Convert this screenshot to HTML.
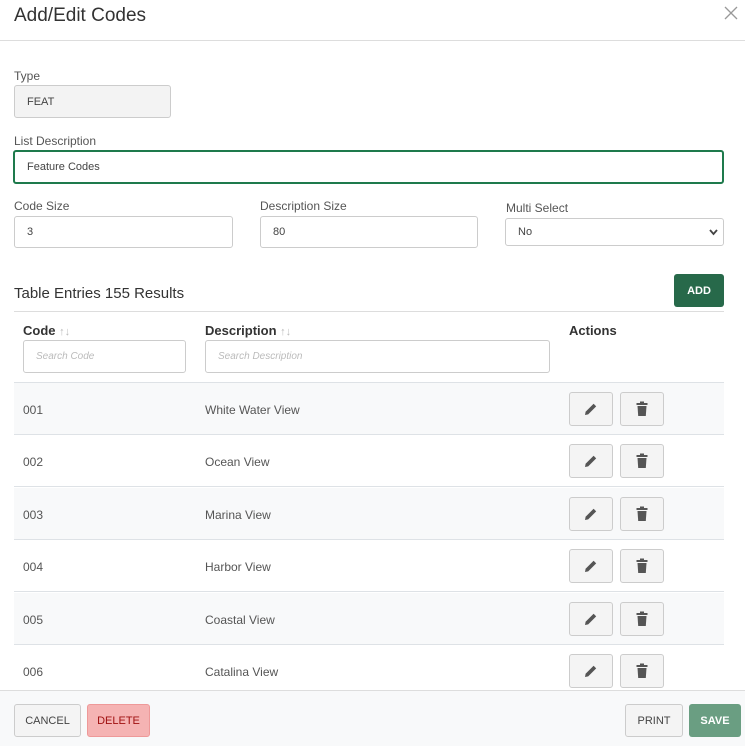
<!DOCTYPE html><html><head><meta charset="utf-8"><style>
*{box-sizing:border-box;margin:0;padding:0}
body{width:745px;height:746px;overflow:hidden;background:#fff;font-family:"Liberation Sans",sans-serif;color:#333;position:relative}
.a{position:absolute}
.lbl{font-size:12px;color:#555}
.inp{position:absolute;border:1px solid #ccc;border-radius:3px;font-size:11px;color:#444;padding-left:12px;display:flex;align-items:center;background:#fff}
.row{position:absolute;left:14px;width:710px;height:52px;border-bottom:1px solid #dee2e6;font-size:12px;color:#555}
.row span{position:absolute;top:20px}
.ib{position:absolute;width:44px;height:34px;border:1px solid #ccc;border-radius:3px;background:#f4f4f4;display:flex;align-items:center;justify-content:center}
.btn{position:absolute;top:704px;height:33px;border-radius:3px;font-size:11px;display:flex;align-items:center;justify-content:center}
</style></head><body>
<div class="a" style="left:14px;top:5px;font-size:19px;color:#333">Add/Edit Codes</div>
<svg class="a" style="left:724px;top:6px" width="14" height="14"><path d="M1 1L13 13M13 1L1 13" stroke="#999" stroke-width="1.3"/></svg>
<div class="a" style="left:0;top:40px;width:745px;border-top:1px solid #ddd"></div>
<div class="a lbl" style="left:14px;top:69px">Type</div>
<div class="inp" style="left:14px;top:85px;width:157px;height:33px;background:#f3f3f3">FEAT</div>
<div class="a lbl" style="left:14px;top:134px">List Description</div>
<div class="inp" style="left:13px;top:150px;width:711px;height:34px;border:2px solid #1e7a4c">Feature Codes</div>
<div class="a lbl" style="left:14px;top:199px">Code Size</div>
<div class="inp" style="left:14px;top:216px;width:219px;height:32px">3</div>
<div class="a lbl" style="left:260px;top:199px">Description Size</div>
<div class="inp" style="left:260px;top:216px;width:218px;height:32px">80</div>
<div class="a lbl" style="left:506px;top:201px">Multi Select</div>
<div class="inp" style="left:505px;top:218px;width:219px;height:28px">No<svg class="a" style="right:5px;top:10px" width="9" height="7"><path d="M1 1L4.5 5L8 1" stroke="#444" stroke-width="1.8" fill="none"/></svg></div>
<div class="a" style="left:14px;top:285px;font-size:15px;color:#333">Table Entries 155 Results</div>
<div class="a" style="left:674px;top:274px;width:50px;height:33px;background:#27694a;border-radius:3px;color:#fff;font-size:11px;font-weight:bold;display:flex;align-items:center;justify-content:center">ADD</div>
<div class="a" style="left:14px;top:311px;width:710px;border-top:1px solid #ddd"></div>
<div class="a" style="left:23px;top:323px;font-size:13px;font-weight:bold;color:#333">Code <span style="color:#bbb;font-weight:normal;font-size:11px">↑↓</span></div>
<div class="a" style="left:205px;top:323px;font-size:13px;font-weight:bold;color:#333">Description <span style="color:#bbb;font-weight:normal;font-size:11px">↑↓</span></div>
<div class="a" style="left:569px;top:323px;font-size:13px;font-weight:bold;color:#333">Actions</div>
<div class="inp" style="left:23px;top:340px;width:163px;height:33px;font-style:italic;color:#bbb;font-size:10px">Search Code</div>
<div class="inp" style="left:205px;top:340px;width:345px;height:33px;font-style:italic;color:#bbb;font-size:10px">Search Description</div>
<div class="a" style="left:14px;top:382px;width:710px;border-top:1px solid #dee2e6"></div>
<div class="row" style="top:383px;background:#f8f9fa"><span style="left:9px">001</span><span style="left:191px">White Water View</span></div>
<div class="row" style="top:435px"><span style="left:9px">002</span><span style="left:191px">Ocean View</span></div>
<div class="row" style="top:488px;background:#f8f9fa"><span style="left:9px">003</span><span style="left:191px">Marina View</span></div>
<div class="row" style="top:540px"><span style="left:9px">004</span><span style="left:191px">Harbor View</span></div>
<div class="row" style="top:593px;background:#f8f9fa"><span style="left:9px">005</span><span style="left:191px">Coastal View</span></div>
<div class="row" style="top:645px;border:none"><span style="left:9px">006</span><span style="left:191px">Catalina View</span></div>
<div id="btns"></div>
<script>
var ys=[392,444,497,549,602,654],h='';
ys.forEach(function(y){h+='<div class="ib" style="left:569px;top:'+y+'px"><svg width="16" height="16"><path d="M2 14L2.6 10.8L10.6 2.8L13.2 5.4L5.2 13.4Z" fill="#555"/></svg></div><div class="ib" style="left:620px;top:'+y+'px"><svg width="12" height="16"><rect x="0.5" y="2" width="11" height="2" fill="#555"/><rect x="4" y="0.5" width="4" height="2" fill="#555"/><path d="M1.5 5H10.5L9.8 15H2.2Z" fill="#555"/></svg></div>'});
document.getElementById('btns').innerHTML=h;
</script>
<div class="a" style="left:0;top:690px;width:745px;height:56px;background:#f8f9fa;border-top:1px solid #ddd"></div>
<div class="btn" style="left:14px;width:67px;border:1px solid #ccc;background:#f4f4f4;color:#444">CANCEL</div>
<div class="btn" style="left:87px;width:63px;border:1px solid #e99;background:#f5b3b3;color:#a01010">DELETE</div>
<div class="btn" style="left:625px;width:58px;border:1px solid #ccc;background:#f4f4f4;color:#444">PRINT</div>
<div class="btn" style="left:689px;width:52px;background:#6a9e82;color:#fff;font-weight:bold">SAVE</div>
</body></html>
